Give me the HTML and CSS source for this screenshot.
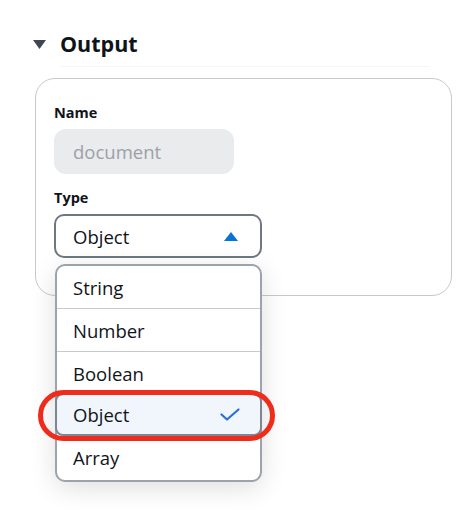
FILE: index.html
```html
<!DOCTYPE html>
<html>
<head>
<meta charset="utf-8">
<link rel="stylesheet" href="styles.css">
</head>
<body>
<div class="page">
  <div class="section-head">
    <svg class="caret" width="13" height="9" viewBox="0 0 13 9"><polygon points="0,0 13,0 6.5,9" fill="#414750"/></svg>
    <span class="section-title">Output</span>
  </div>
  <div class="head-rule"></div>
  <div class="card">
    <div class="field-label">Name</div>
    <div class="input-disabled">document</div>
    <div class="field-label type-label">Type</div>
    <div class="select-wrap">
      <div class="select">
        <span>Object</span>
        <svg class="up" width="14" height="9" viewBox="0 0 14 9"><polygon points="7,0 14,9 0,9" fill="#0972d3"/></svg>
      </div>
      <div class="menu">
        <div class="opt">String</div>
        <div class="opt">Number</div>
        <div class="opt">Boolean</div>
        <div class="opt selected"><span>Object</span>
          <svg width="22" height="15" viewBox="0 0 22 15"><path d="M2.5 7.5 L8 12.5 L19.5 2.5" fill="none" stroke="#2b6fd6" stroke-width="2.2" stroke-linecap="round" stroke-linejoin="round"/></svg>
        </div>
        <div class="opt last">Array</div>
      </div>
    </div>
  </div>
  <div class="annot"></div>
</div>
</body>
</html>
```
FILE: styles.css
```css
html, body {
  margin: 0;
  padding: 0;
  background: #ffffff;
}
body {
  font-family: "Open Sans", "Noto Sans", sans-serif;
  color: #0f141a;
}
.page {
  position: relative;
  width: 474px;
  height: 530px;
  padding-top: 30px;
  box-sizing: border-box;
}
.section-head {
  display: flex;
  align-items: center;
  margin-left: 33px;
  height: 28px;
}
.caret {
  display: block;
  margin-right: 14px;
}
.section-title {
  font-size: 21.5px;
  font-weight: 700;
  line-height: 28px;
}
.head-rule {
  margin: 8px 0 0 60px;
  width: 370px;
  height: 1px;
  background: #f5f5f6;
}
.card {
  margin: 11px 0 0 35px;
  width: 417px;
  height: 218px;
  box-sizing: border-box;
  border: 1px solid #c6c9ce;
  border-radius: 20px;
  padding: 24px 0 0 18px;
}
.field-label {
  font-size: 14.5px;
  font-weight: 700;
  line-height: 20px;
}
.input-disabled {
  margin-top: 6px;
  width: 180px;
  height: 45px;
  box-sizing: border-box;
  background: #e9ebed;
  border-radius: 12px;
  padding-left: 19px;
  font-size: 18.5px;
  line-height: 45px;
  color: #9ba1a8;
}
.type-label {
  margin-top: 14px;
}
.select-wrap {
  position: relative;
  margin-top: 6px;
  width: 208px;
}
.select {
  height: 44px;
  box-sizing: border-box;
  border: 2px solid #6f7783;
  border-radius: 10px;
  display: flex;
  align-items: center;
  justify-content: space-between;
  padding: 0 22px 0 17px;
  font-size: 18.5px;
}
.menu {
  position: absolute;
  left: 1px;
  top: 50px;
  width: 207px;
  box-sizing: border-box;
  border: 2px solid #9aa3ae;
  border-radius: 10px;
  background: #ffffff;
  box-shadow: 0 6px 26px rgba(0, 0, 0, 0.13);
  z-index: 2;
}
.opt {
  height: 43px;
  box-sizing: border-box;
  border-bottom: 1px solid #c6cad0;
  padding-left: 16px;
  font-size: 18.5px;
  line-height: 43px;
}
.opt.last {
  border-bottom: none;
  height: 44px;
  line-height: 44px;
}
.opt.selected {
  margin: -2px -2px 0 -2px;
  height: 43px;
  border: 2px solid #7d8794;
  border-radius: 8px;
  background: #f1f6fd;
  padding: 0 19px 0 16px;
  display: flex;
  align-items: center;
  justify-content: space-between;
}
.annot {
  position: absolute;
  left: 38px;
  top: 390px;
  width: 237px;
  height: 51px;
  box-sizing: border-box;
  border: 5px solid #ef2b1c;
  border-radius: 26px;
  z-index: 3;
}
```
